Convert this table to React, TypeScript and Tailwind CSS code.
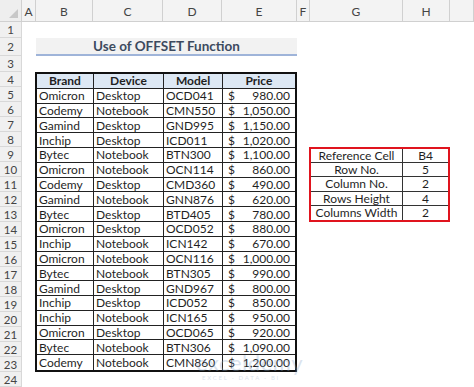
import React from 'react';

const rows: [string, string, string, string][] = [
  ['Omicron', 'Desktop', 'OCD041', '980.00'],
  ['Codemy', 'Notebook', 'CMN550', '1,050.00'],
  ['Gamind', 'Desktop', 'GND995', '1,150.00'],
  ['Inchip', 'Desktop', 'ICD011', '1,020.00'],
  ['Bytec', 'Notebook', 'BTN300', '1,100.00'],
  ['Omicron', 'Notebook', 'OCN114', '860.00'],
  ['Codemy', 'Desktop', 'CMD360', '490.00'],
  ['Gamind', 'Notebook', 'GNN876', '620.00'],
  ['Bytec', 'Desktop', 'BTD405', '780.00'],
  ['Omicron', 'Desktop', 'OCD052', '880.00'],
  ['Inchip', 'Notebook', 'ICN142', '670.00'],
  ['Omicron', 'Notebook', 'OCN116', '1,000.00'],
  ['Bytec', 'Notebook', 'BTN305', '990.00'],
  ['Gamind', 'Desktop', 'GND967', '800.00'],
  ['Inchip', 'Desktop', 'ICD052', '850.00'],
  ['Inchip', 'Notebook', 'ICN165', '950.00'],
  ['Omicron', 'Desktop', 'OCD065', '920.00'],
  ['Bytec', 'Notebook', 'BTN306', '1,090.00'],
  ['Codemy', 'Notebook', 'CMN860', '1,200.00'],
];

const refRows: [string, string][] = [
  ['Reference Cell', 'B4'],
  ['Row No.', '5'],
  ['Column No.', '2'],
  ['Rows Height', '4'],
  ['Columns Width', '2'],
];

const letters = ['A', 'B', 'C', 'D', 'E', 'F', 'G', 'H', ''];

export default function App() {
  return (
    <div
      className="relative w-[474px] h-[387px] overflow-hidden bg-white text-[12px] leading-[13px] text-[#1f1f1f] grid grid-cols-[22px_14px_57px_70px_59px_75px_13px_93px_47px_1fr] grid-rows-[22px_16px_18px_16px_repeat(21,15px)]"
      style={{ fontFamily: 'Lato, "Open Sans", sans-serif' }}
    >
      {/* corner */}
      <div className="col-start-1 row-start-1 bg-[#eeeeee] border-r border-b border-[#d0d0d0] flex items-end justify-end p-[3px]">
        <div className="w-0 h-0 border-l-[9px] border-l-transparent border-b-[9px] border-b-[#c8c8c8]" />
      </div>
      {/* column headers */}
      {letters.map((l, i) => (
        <div
          key={'c' + i}
          className="row-start-1 bg-[#f3f3f3] border-r border-b border-[#d0d0d0] flex items-center justify-center text-[#444] pt-[2px]"
          style={{ gridColumnStart: i + 2 }}
        >
          {l}
        </div>
      ))}
      {/* row numbers */}
      {Array.from({ length: 24 }, (_, i) => (
        <div
          key={'r' + i}
          className="col-start-1 bg-[#f0f0f0] border-r border-b border-[#d8d8d8] flex items-center justify-center text-[#444] text-[11.5px] min-h-0"
          style={{ gridRowStart: i + 2 }}
        >
          {i + 1}
        </div>
      ))}

      {/* title */}
      <div className="col-start-3 col-span-4 row-start-3 bg-[#f2f2f2] border-b-2 border-[#9fb4d9] flex items-center justify-center font-bold text-[13.5px] text-[#3c4a5e]">
        Use of OFFSET Function
      </div>

      {/* data table */}
      <div className="col-start-3 col-span-4 row-start-5 row-span-20 min-h-0 -ml-[1px] border-2 border-[#111] grid grid-cols-[57px_70px_59px_1fr] grid-rows-[repeat(20,minmax(0,1fr))]">
        {['Brand', 'Device', 'Model', 'Price'].map((h, i) => (
          <div
            key={h}
            className={`bg-[#dde8f4] border-b border-[#222] font-bold flex items-center justify-center ${i < 3 ? 'border-r' : ''}`}
          >
            {h}
          </div>
        ))}
        {rows.map((r, ri) => (
          <React.Fragment key={ri}>
            <div className={`border-r border-[#222] px-[2px] flex items-center ${ri < rows.length - 1 ? 'border-b' : ''}`}>{r[0]}</div>
            <div className={`border-r border-[#222] px-[2px] flex items-center ${ri < rows.length - 1 ? 'border-b' : ''}`}>{r[1]}</div>
            <div className={`border-r border-[#222] px-[2px] flex items-center ${ri < rows.length - 1 ? 'border-b' : ''}`}>{r[2]}</div>
            <div className={`border-[#222] pl-[5px] pr-[5px] flex items-center justify-between ${ri < rows.length - 1 ? 'border-b' : ''}`}>
              <span>$</span>
              <span>{r[3]}</span>
            </div>
          </React.Fragment>
        ))}
      </div>

      {/* reference table */}
      <div className="col-start-8 col-span-2 row-start-10 row-span-5 min-h-0 -ml-[1px] border-2 border-[#e0141e] grid grid-cols-[92px_1fr] grid-rows-[repeat(5,minmax(0,1fr))]">
        {refRows.map((r, ri) => (
          <React.Fragment key={ri}>
            <div className={`border-r border-[#333] flex items-center justify-center ${ri < refRows.length - 1 ? 'border-b' : ''}`}>{r[0]}</div>
            <div className={`border-[#333] flex items-center justify-center ${ri < refRows.length - 1 ? 'border-b' : ''}`}>{r[1]}</div>
          </React.Fragment>
        ))}
      </div>

      {/* watermark */}
      <div className="absolute left-[196px] top-[352px] flex flex-col items-start pointer-events-none opacity-30">
        <span className="text-[22px] leading-[22px] text-[#8aa6c8] tracking-wide">exceldemy</span>
        <span className="text-[6px] leading-[8px] text-[#8aa6c8] tracking-[0.3em] pl-[6px]">EXCEL · DATA · BI</span>
      </div>
    </div>
  );
}
